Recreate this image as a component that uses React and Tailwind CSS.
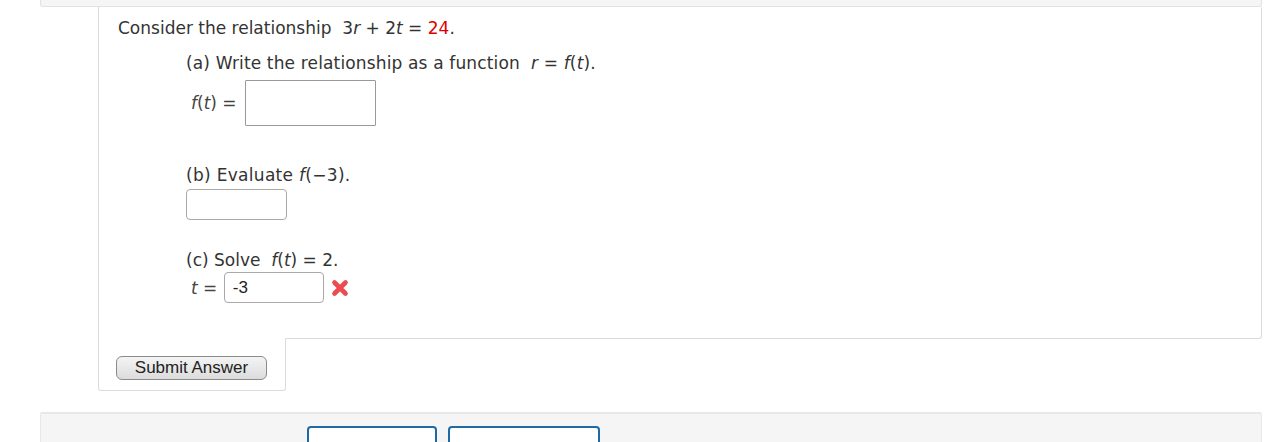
import React from "react";

const I = ({ children }) => <span className="italic">{children}</span>;

export default function App() {
  return (
    <div className="w-[1284px] h-[442px] bg-white overflow-hidden font-['DejaVu_Sans',sans-serif] text-[17px] text-[#333]">
      <div className="ml-[40px] w-[1222px] h-[7px] bg-[#f5f5f5] border border-t-0 border-[#e2e2e2] rounded-b-[3px]" />
      <div className="ml-[98px] w-[1164px]">
        <div className="h-[332px] border-l border-r border-b border-[#dcdcdc] rounded-br-[3px] pl-[19px] pt-[9px]">
          <div className="h-[24px] leading-[24px] whitespace-pre">
            Consider the relationship  3<I>r</I> + 2<I>t</I> = <span className="text-[#e00000]">24</span>.
          </div>
          <div className="ml-[68px]">
            <div className="mt-[11px] h-[24px] leading-[24px] whitespace-pre tracking-[0.15px]">
              (a) Write the relationship as a function  <I>r</I> = <I>f</I>(<I>t</I>).
            </div>
            <div className="mt-[5px] h-[46px] flex items-center ml-[5px]">
              <span className="whitespace-pre text-[#444] leading-[24px]"><I>f</I>(<I>t</I>) = </span>
              <div className="ml-[3px] w-[131px] h-[46px] border border-[#999] rounded-[1px] bg-white" />
            </div>
            <div className="mt-[37px] h-[24px] leading-[24px] whitespace-pre tracking-[0.3px]">
              (b) Evaluate <I>f</I>(−3).
            </div>
            <div className="mt-[2px] w-[101px] h-[31px] border border-[#a9a9a9] rounded-[4px] bg-white" />
            <div className="mt-[28px] h-[24px] leading-[24px] whitespace-pre">
              (c) Solve  <I>f</I>(<I>t</I>) = 2.
            </div>
            <div className="mt-0 h-[31px] flex items-center ml-[5px]">
              <span className="whitespace-pre text-[#444] leading-[24px]"><I>t</I> = </span>
              <div className="ml-[1px] w-[100px] h-[31px] border border-[#a9a9a9] rounded-[4px] bg-white flex items-center pl-[8px] font-['Liberation_Sans',sans-serif] text-[17px] text-[#222]">
                -3
              </div>
              <svg className="ml-[7px]" width="18" height="18" viewBox="0 0 18 18">
                <path d="M3.5 3.5 L14.5 14.5 M14.5 3.5 L3.5 14.5" stroke="#ee4a52" strokeWidth="4.6" strokeLinecap="round" />
              </svg>
            </div>
          </div>
        </div>
        <div className="-mt-px w-[188px] h-[53px] bg-white border-l border-r border-b border-[#dcdcdc] rounded-b-[3px] pl-[17px] pt-[17px]">
          <button className="w-[151px] h-[24px] rounded-[6px] border border-[#8a8a8a] bg-gradient-to-b from-[#f4f4f4] to-[#dcdcdc] font-['Liberation_Sans',sans-serif] text-[17px] leading-[20px] text-[#222]">
            Submit Answer
          </button>
        </div>
      </div>
      <div className="mt-[21px] ml-[40px] w-[1222px] h-[40px] bg-[#f5f5f5] border-t-2 border-r border-l border-[#e8e8e8] rounded-t-[2px] flex pl-[266px] pt-[12px] gap-[11px]">
        <div className="w-[130px] h-[30px] border-2 border-[#1f6aa5] rounded-t-[4px] bg-white" />
        <div className="w-[152px] h-[30px] border-2 border-[#1f6aa5] rounded-t-[4px] bg-white" />
      </div>
    </div>
  );
}
